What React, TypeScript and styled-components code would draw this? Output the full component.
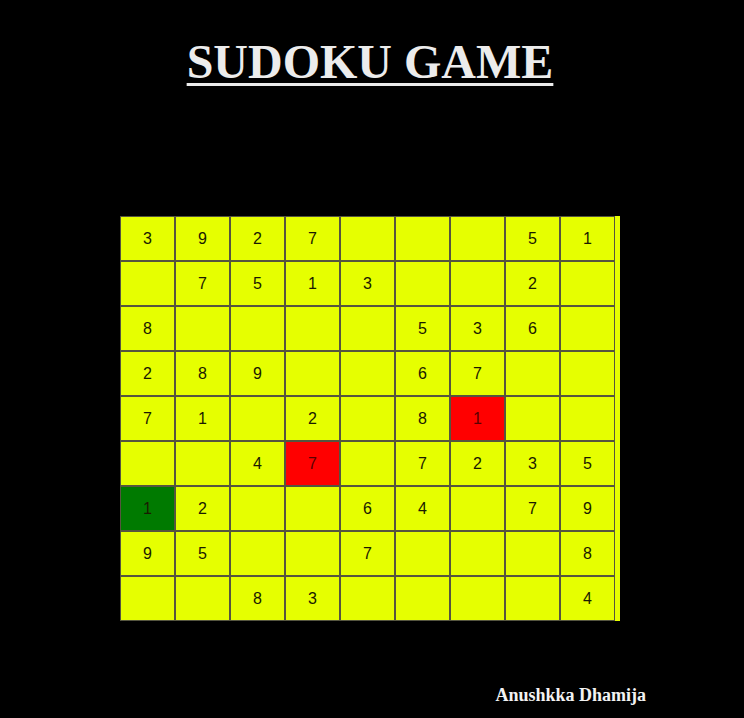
import styled, { createGlobalStyle } from 'styled-components';

const GlobalStyle = createGlobalStyle`
  html, body {
    margin: 0;
    padding: 0;
    background-color: #000;
  }
`;

const Page = styled.div`
  display: flex;
  flex-direction: column;
  min-height: 718px;
  background-color: #000;
`;

const Title = styled.h1`
  margin: 35px 0 0;
  text-align: center;
  font-family: "Liberation Serif", "Times New Roman", serif;
  font-size: 48px;
  font-weight: bold;
  line-height: 53px;
  color: #ececec;
  text-decoration: underline;
  text-decoration-thickness: 3px;
  text-underline-offset: 5px;
  padding-right: 4px;
`;

const BoardWrap = styled.div`
  display: flex;
  margin-top: 128px;
  padding-left: 120px;
`;

const Board = styled.div`
  display: grid;
  grid-template-columns: repeat(9, 55px);
  grid-template-rows: repeat(9, 45px);
  width: 500px;
  background-color: #e6ff00;
`;

type Mark = 'none' | 'red' | 'green';

const Cell = styled.div<{ $mark: Mark }>`
  display: flex;
  align-items: center;
  justify-content: center;
  box-sizing: border-box;
  border: 1px solid #55553f;
  background-color: ${({ $mark }) =>
    $mark === 'red' ? '#ff0000' : $mark === 'green' ? '#007a00' : '#e6ff00'};
  font-family: "Liberation Sans", Arial, sans-serif;
  font-size: 16px;
  color: ${({ $mark }) => ($mark === 'red' ? '#5a0000' : '#1a1a00')};
`;

const Footer = styled.footer`
  display: flex;
  justify-content: flex-end;
  margin-top: 64px;
  padding-right: 98px;
  font-family: "Liberation Serif", "Times New Roman", serif;
  font-size: 18px;
  font-weight: bold;
  color: #f2f2f2;
`;

const grid = [
  '3927   51',
  ' 7513  2 ',
  '8    536 ',
  '289  67  ',
  '71 2 81  ',
  '  47 7235',
  '12  64 79',
  '95  7   8',
  '  83    4',
];

const marks: Record<string, Mark> = {
  '4-6': 'red',
  '5-3': 'red',
  '6-0': 'green',
};

export default function App() {
  return (
    <Page>
      <GlobalStyle />
      <Title>SUDOKU GAME</Title>
      <BoardWrap>
        <Board>
          {grid.map((row, r) =>
            row.split('').map((ch, c) => (
              <Cell key={`${r}-${c}`} $mark={marks[`${r}-${c}`] ?? 'none'}>
                {ch.trim()}
              </Cell>
            ))
          )}
        </Board>
      </BoardWrap>
      <Footer>Anushkka Dhamija</Footer>
    </Page>
  );
}
